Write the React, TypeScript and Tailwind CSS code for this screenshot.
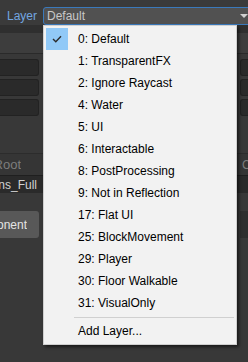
import React from "react";

const items = [
  "0: Default",
  "1: TransparentFX",
  "2: Ignore Raycast",
  "4: Water",
  "5: UI",
  "6: Interactable",
  "8: PostProcessing",
  "9: Not in Reflection",
  "17: Flat UI",
  "25: BlockMovement",
  "29: Player",
  "30: Floor Walkable",
  "31: VisualOnly",
];

function FieldRow() {
  return (
    <div className="flex h-[20px] items-start">
      <div className="h-[17px] w-[39px] rounded-r-[3px] border border-l-0 border-[#222222] bg-[#2a2a2a]" />
      <div className="flex-1" />
      <div className="h-[17px] w-[8px] rounded-l-[3px] border border-r-0 border-[#222222] bg-[#2a2a2a]" />
    </div>
  );
}

export default function App() {
  return (
    <div className="relative h-[362px] w-[248px] overflow-hidden bg-[#383838] font-['Liberation_Sans',Arial,sans-serif] text-[12px]">
      {/* top bar */}
      <div className="h-[7px] bg-[#3a3a3a]" />
      <div className="flex h-[18px] bg-[#3a3a3a]">
        <div className="flex w-[43px] items-center pl-[7px] text-[#72a6e0]">Layer</div>
        <div className="relative mr-[-4px] flex flex-1 items-center rounded-[3px] border border-[#3a79bb] bg-[#515151] pl-[3px] text-[#c8c8c8]">
          Default
          <div className="absolute right-[3px] top-[6px] h-0 w-0 border-l-[4px] border-r-[4px] border-t-[4px] border-l-transparent border-r-transparent border-t-[#d0d0d0]" />
        </div>
      </div>
      {/* background inspector */}
      <div className="h-[8px] bg-[#2f2f2f]" />
      <div className="h-[20px] bg-[#3d3d3d]" />
      <div className="h-[1px] bg-[#2a2a2a]" />
      <div className="h-[5px]" />
      <FieldRow />
      <FieldRow />
      <FieldRow />
      <div className="h-[34px]" />
      <div className="h-[1px] bg-[#2c2c2c]" />
      <div className="flex h-[21px] items-center bg-[#353535] text-[#7d7d7d]">
        <div className="flex w-[21px] justify-end overflow-hidden whitespace-nowrap text-[13px]">Root</div>
        <div className="flex-1" />
        <div className="w-[6px] overflow-hidden whitespace-nowrap">Co</div>
      </div>
      <div className="h-[1px] bg-[#1f1f1f]" />
      <div className="flex h-[17px] items-center bg-[#2a2a2a] text-[#d2d2d2]">
        <div className="flex w-[37px] justify-end overflow-hidden whitespace-nowrap">Animations_Full</div>
      </div>
      <div className="h-[18px]" />
      <div className="flex h-[27px]">
        <div className="flex w-[39px] items-center overflow-hidden rounded-r-[3px] bg-[#585858] text-[#e4e4e4]">
          <div className="flex w-[27px] justify-end overflow-hidden whitespace-nowrap">Add Component</div>
        </div>
        <div className="flex-1" />
        <div className="w-[8px] bg-[#2e2e2e]" />
      </div>

      {/* popup menu */}
      <div className="absolute left-[43px] top-[25px] h-[320px] w-[194px] border border-[#cfcfcf] bg-[#f2f2f2] pt-[2px] text-black shadow-[2px_2px_3px_rgba(0,0,0,0.55)]">
        {items.map((it, i) => (
          <div key={it} className="flex h-[22px] items-center pl-[2px]">
            <div className="flex h-[22px] w-[22px] items-center justify-center">
              {i === 0 && (
                <div className="flex h-[22px] w-[22px] items-center justify-center bg-[#91c9f7]">
                  <svg width="10" height="8" viewBox="0 0 10 8">
                    <path d="M1 4 L3.8 6.8 L9 1.2" fill="none" stroke="#2b2b2b" strokeWidth="1.4" />
                  </svg>
                </div>
              )}
            </div>
            <div className="pl-[10px] whitespace-nowrap">{it}</div>
          </div>
        ))}
        <div className="flex h-[6px] items-center">
          <div className="ml-[30px] h-[1px] w-[160px] bg-[#d0d0d0]" />
        </div>
        <div className="flex h-[22px] items-center pl-[34px]">Add Layer...</div>
      </div>
    </div>
  );
}
